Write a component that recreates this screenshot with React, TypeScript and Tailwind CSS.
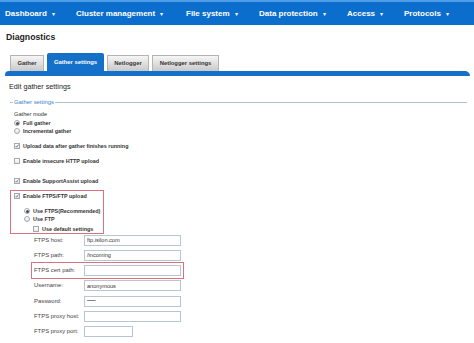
import React from 'react';

const navItems = [
  { label: 'Dashboard', w: 'w-[71px]' },
  { label: 'Cluster management', w: 'w-[110px]' },
  { label: 'File system', w: 'w-[73px]' },
  { label: 'Data protection', w: 'w-[88px]' },
  { label: 'Access', w: 'w-[57px]' },
  { label: 'Protocols', w: 'w-[70px]' },
];

const tabs = [
  { label: 'Gather', w: 'w-[34px]', active: false },
  { label: 'Gather settings', w: 'w-[57px]', active: true },
  { label: 'Netlogger', w: 'w-[42px]', active: false },
  { label: 'Netlogger settings', w: 'w-[67px]', active: false },
];

const Checkbox = ({ checked }: { checked?: boolean }) => (
  <span className="w-[6px] h-[6px] shrink-0 border border-[#a3a9b1] bg-gradient-to-b from-[#ffffff] to-[#e6e8eb] flex items-center justify-center">
    {checked && (
      <svg width="6" height="6" viewBox="0 0 6 6" className="-mt-[1px]">
        <path d="M1 3.2 L2.5 4.7 L5.2 0.8" fill="none" stroke="#34466a" strokeWidth="1" />
      </svg>
    )}
  </span>
);

const Radio = ({ checked }: { checked?: boolean }) => (
  <span className="w-[6px] h-[6px] shrink-0 rounded-full border border-[#a3a9b1] bg-gradient-to-b from-[#ffffff] to-[#e2e4e7] flex items-center justify-center">
    {checked && <span className="w-[3px] h-[3px] rounded-full bg-[#4a4f58]" />}
  </span>
);

const Option = ({
  kind,
  checked,
  label,
  className = '',
}: {
  kind: 'check' | 'radio';
  checked?: boolean;
  label: string;
  className?: string;
}) => (
  <div className={`h-[8px] flex items-center gap-[3px] ${className}`}>
    {kind === 'check' ? <Checkbox checked={checked} /> : <Radio checked={checked} />}
    <span className="text-[5.4px] leading-[8px] font-bold text-[#333]">{label}</span>
  </div>
);

const fields = [
  { label: 'FTPS host:', value: 'ftp.isilon.com' },
  { label: 'FTPS path:', value: '/incoming' },
  { label: 'FTPS cert path:', value: '', highlight: true },
  { label: 'Username:', value: 'anonymous' },
  { label: 'Password:', value: '•••••••••', password: true },
  { label: 'FTPS proxy host:', value: '' },
  { label: 'FTPS proxy port:', value: '', short: true },
];

export default function App() {
  return (
    <div className="w-[474px] h-[343px] bg-white overflow-hidden font-['Liberation_Sans',Arial,sans-serif]">
      {/* top nav */}
      <div className="h-[25px] bg-[#0b6dcc] border-t-[2px] border-[#4e9de6] flex items-center pl-[5px]">
        {navItems.map((item) => (
          <div key={item.label} className={`${item.w} shrink-0 flex items-center gap-[5px] text-white`}>
            <span className="text-[8px] font-bold leading-[10px]">{item.label}</span>
            <span className="text-[6px] leading-[6px]">▾</span>
          </div>
        ))}
      </div>

      <div className="pl-[5px] pr-[4px]">
        <div className="mt-[7px] h-[11px] leading-[11px] pl-[1px] text-[8.7px] font-bold text-[#222]">
          Diagnostics
        </div>

        {/* tabs */}
        <div className="mt-[10px] h-[18px] flex items-end gap-[3px] pl-[5px]">
          {tabs.map((t) =>
            t.active ? (
              <div
                key={t.label}
                className={`${t.w} h-[18px] bg-[#1470c9] rounded-t-[2px] flex items-center justify-center text-[5.9px] font-bold text-white`}
              >
                {t.label}
              </div>
            ) : (
              <div
                key={t.label}
                className={`${t.w} h-[16px] border border-b-0 border-[#b4b4b4] bg-gradient-to-b from-[#f6f6f6] to-[#c9c9c9] flex items-center justify-center text-[5.9px] font-bold text-[#333]`}
              >
                {t.label}
              </div>
            ),
          )}
        </div>
        <div className="h-[5px] bg-[#1470c9] rounded-tl-[4px] rounded-tr-[5px]" />

        <div className="mt-[6px] h-[9px] leading-[9px] pl-[4px] text-[7.2px] text-[#222]">Edit gather settings</div>

        <div className="pl-[5px]">
          {/* legend */}
          <div className="mt-[7px] h-[8px] flex items-center">
            <span className="w-[3px] border-t border-[#b3c2d2]" />
            <span className="px-[1px] text-[5.9px] leading-[8px] text-[#3b80d0]">Gather settings</span>
            <span className="flex-1 border-t border-[#b3c2d2] mr-[3px]" />
          </div>

          <div className="pl-[4px]">
            <div className="mt-[4px] h-[8px] leading-[8px] text-[5.7px] text-[#333]">Gather mode</div>
            <Option kind="radio" checked label="Full gather" className="mt-[1px]" />
            <Option kind="radio" label="Incremental gather" />
            <Option kind="check" checked label="Upload data after gather finishes running" className="mt-[7px]" />
            <Option kind="check" label="Enable insecure HTTP upload" className="mt-[7px]" />
            <Option kind="check" checked label="Enable SupportAssist upload" className="mt-[12px]" />
          </div>

          {/* ftps box */}
          <div className="mt-[5px] w-[94px] border border-[#d9727c] pl-[3px] pt-[1px]">
            <Option kind="check" checked label="Enable FTPS/FTP upload" />
            <div className="pl-[10px]">
              <Option kind="radio" checked label="Use FTPS(Recommended)" className="mt-[7px]" />
              <Option kind="radio" label="Use FTP" />
            </div>
            <div className="pl-[19px]">
              <Option kind="check" label="Use default settings" className="mt-[2px] h-[7px]" />
            </div>
          </div>

          {/* fields */}
          <div className="mt-[0.5px] pl-[24px] flex flex-col gap-[4.25px]">
            {fields.map((f) => (
              <div
                key={f.label}
                className={`w-[147px] h-[11px] flex items-center ${
                  f.highlight ? 'outline-1 outline-solid outline-[#d9727c] outline-offset-2' : ''
                }`}
              >
                <span className="w-[50px] shrink-0 text-[5.9px] text-[#444]">{f.label}</span>
                <div
                  className={`${f.short ? 'w-[49px]' : 'w-[97px]'} h-[11px] border border-[#b8c5d2] bg-white flex items-center pl-[2px] ${
                    f.password ? 'text-[4px] tracking-[-0.5px] text-[#555]' : 'text-[5.6px] text-[#333]'
                  }`}
                >
                  {f.value}
                </div>
              </div>
            ))}
          </div>
        </div>
      </div>
    </div>
  );
}
